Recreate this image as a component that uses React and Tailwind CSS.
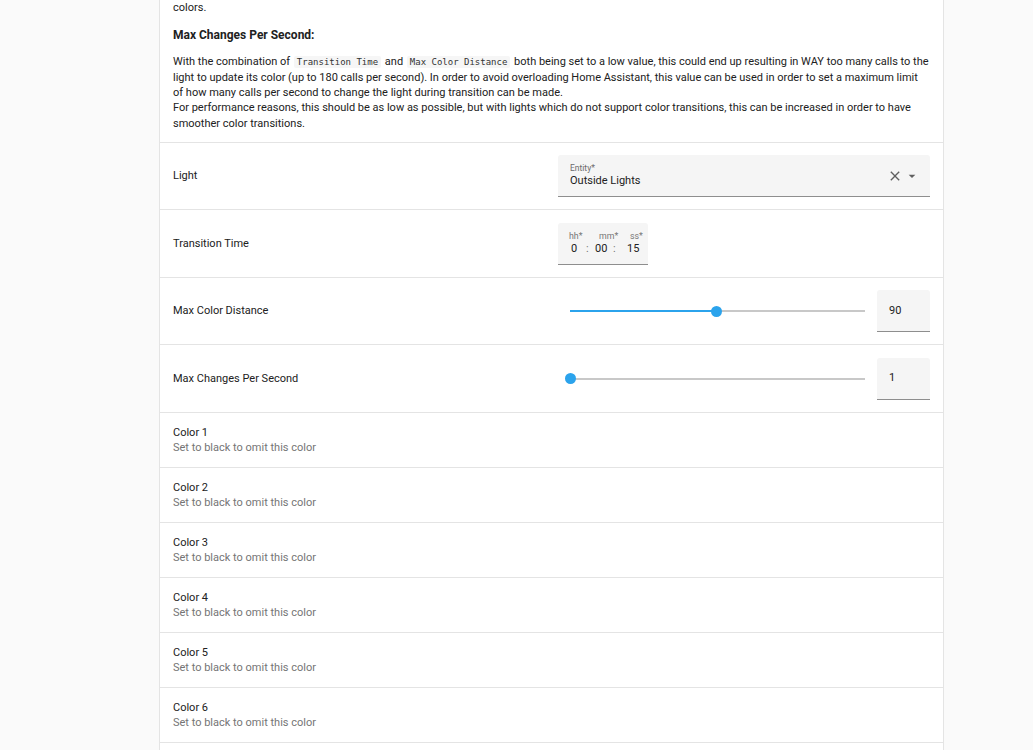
import React from "react";

const font = { fontFamily: "Roboto, 'Liberation Sans', sans-serif" };

const Slider = ({ pct }) => (
  <div className="relative flex-1 h-[12px] mx-[12px] flex items-center">
    <div className="w-full h-[2px] bg-[#c8c8c8]"></div>
    <div className="absolute left-0 h-[2px] bg-[#2ba3ec]" style={{ width: pct + "%" }}></div>
    <div
      className="absolute w-[11px] h-[11px] rounded-full bg-[#2ba3ec] -ml-[5.5px]"
      style={{ left: pct + "%" }}
    ></div>
  </div>
);

const NumberField = ({ value }) => (
  <div className="w-[53px] h-[42px] bg-[#f5f5f5] rounded-t-[3px] border-b border-[#8e8e8e] flex items-center px-[12px] text-[11px] text-[#212121]">
    {value}
  </div>
);

const Row = ({ label, tall, children }) => (
  <div className={(tall ? "h-[68px]" : "h-[67px]") + " border-b border-[#e4e4e4] flex items-center px-[13px]"}>
    <div className="flex-1 text-[11px] text-[#212121]">{label}</div>
    <div className="w-[372px] flex items-center">{children}</div>
  </div>
);

const ColorRow = ({ n }) => (
  <div className="h-[55px] border-b border-[#e4e4e4] px-[13px] pt-[12px]">
    <div className="text-[11px] leading-[15px] text-[#212121]">Color {n}</div>
    <div className="text-[11px] leading-[15px] text-[#757575]">Set to black to omit this color</div>
  </div>
);

const Code = ({ children }) => (
  <code
    className="bg-[#f6f6f6] px-[3px] py-[1px] mx-[1px] text-[9px] text-[#333] rounded-[2px]"
    style={{ fontFamily: "'DejaVu Sans Mono', 'Liberation Mono', monospace" }}
  >
    {children}
  </code>
);

export default function App() {
  return (
    <div className="h-[750px] overflow-hidden bg-[#fafafa]" style={font}>
      <div className="ml-[159px] w-[785px] bg-white border-x border-[#e4e4e4]">
        <div className="px-[13px] pb-[11.5px] border-b border-[#e4e4e4]">
          <p className="text-[11px] leading-[15.2px] text-[#212121]">colors.</p>
          <h4 className="mt-[12px] text-[12px] font-bold text-[#212121] leading-[16px]">
            Max Changes Per Second:
          </h4>
          <p className="mt-[10.5px] text-[11px] leading-[15.25px] text-[#212121]">
            With the combination of <Code>Transition Time</Code> and <Code>Max Color Distance</Code> both being set to a low value, this could end up resulting in WAY too many calls to the light to update its color (up to 180 calls per second). In order to avoid overloading Home Assistant, this value can be used in order to set a maximum limit of how many calls per second to change the light during transition can be made.
            <br />
            For performance reasons, this should be as low as possible, but with lights which do not support color transitions, this can be increased in order to have smoother color transitions.
          </p>
        </div>

        <Row label="Light">
          <div className="w-full h-[42px] bg-[#f5f5f5] rounded-t-[3px] border-b border-[#8e8e8e] flex items-center pl-[12px] pr-[10px]">
            <div className="flex-1">
              <div className="text-[8.5px] leading-[10px] text-[#6b6b6b]">Entity*</div>
              <div className="text-[11px] leading-[15px] text-[#212121]">Outside Lights</div>
            </div>
            <svg width="16" height="16" viewBox="0 0 24 24" className="mr-[1px]">
              <path d="M19 6.41 17.59 5 12 10.59 6.41 5 5 6.41 10.59 12 5 17.59 6.41 19 12 13.41 17.59 19 19 17.59 13.41 12z" fill="#5f5f5f" />
            </svg>
            <svg width="16" height="16" viewBox="0 0 24 24">
              <path d="M7 10l5 5 5-5z" fill="#5f5f5f" />
            </svg>
          </div>
        </Row>

        <Row label="Transition Time" tall>
          <div className="w-[90px] h-[42px] bg-[#f5f5f5] rounded-t-[3px] border-b border-[#8e8e8e] flex flex-col justify-center pt-[2px]">
            <div className="flex pl-[11px] text-[8.8px] leading-[9px] text-[#777]">
              <span className="w-[30px]">hh*</span>
              <span className="w-[31px]">mm*</span>
              <span>ss*</span>
            </div>
            <div className="flex pl-[13px] text-[11px] leading-[15px] text-[#212121]">
              <span className="w-[15px]">0</span>
              <span className="w-[9px] text-[#777]">:</span>
              <span className="w-[18px]">00</span>
              <span className="w-[14px] text-[#777]">:</span>
              <span>15</span>
            </div>
          </div>
        </Row>

        <Row label="Max Color Distance">
          <Slider pct={49.7} />
          <NumberField value="90" />
        </Row>

        <Row label="Max Changes Per Second" tall>
          <Slider pct={0} />
          <NumberField value="1" />
        </Row>

        {[1, 2, 3, 4, 5, 6, 7].map((n) => (
          <ColorRow key={n} n={n} />
        ))}
      </div>
    </div>
  );
}
